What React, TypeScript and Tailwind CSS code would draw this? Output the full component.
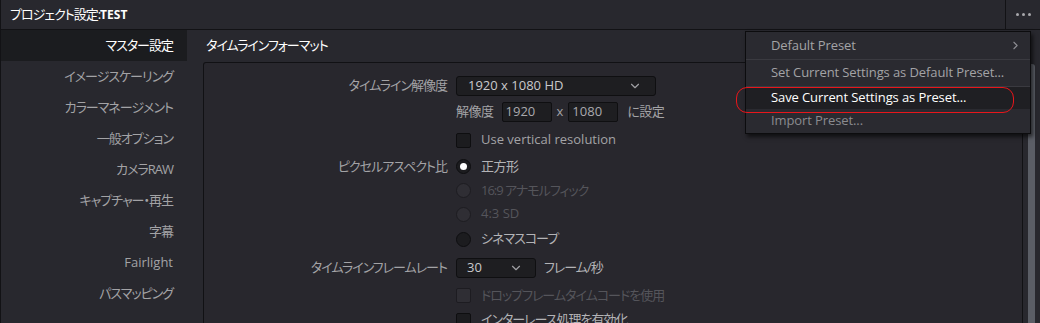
import { ChevronDown, ChevronRight } from 'lucide-react';

const font = { fontFamily: '"Open Sans", "Noto Sans CJK JP", sans-serif', fontFeatureSettings: '"palt"' };

const navItems = [
  'マスター設定',
  'イメージスケーリング',
  'カラーマネージメント',
  '一般オプション',
  'カメラRAW',
  'キャプチャー・再生',
  '字幕',
  'Fairlight',
  'パスマッピング',
];

function Radio({ checked, disabled }: { checked?: boolean; disabled?: boolean }) {
  return (
    <span
      className={`w-[15px] h-[15px] rounded-full flex items-center justify-center border ${
        disabled ? 'bg-[#2f2e34] border-[#1d1c21]' : 'bg-[#1c1c1f] border-[#0e0e10]'
      }`}
    >
      {checked && <span className="w-[7px] h-[7px] rounded-full bg-white" />}
    </span>
  );
}

function Checkbox({ disabled }: { disabled?: boolean }) {
  return (
    <span
      className={`w-[15px] h-[15px] rounded-[2px] border ${
        disabled ? 'bg-[#2f2e34] border-[#1d1c21]' : 'bg-[#1c1c1f] border-[#0e0e10]'
      }`}
    />
  );
}

function Row({ h, label, children }: { h: string; label?: string; children: React.ReactNode }) {
  return (
    <div className={`flex items-center shrink-0 ${h}`}>
      <div className="w-[243px] text-right text-[13px] tracking-[-1px] text-[#a3a3a6]">{label}</div>
      <div className="ml-[9px] flex items-center">{children}</div>
    </div>
  );
}

export default function App() {
  return (
    <div className="relative w-[1040px] h-[323px] overflow-hidden bg-[#28282e] flex flex-col" style={font}>
      {/* title bar */}
      <div className="h-[30px] shrink-0 flex items-stretch border-b border-[#121215] border-l border-l-[#121215]">
        <div className="flex-1 flex items-center pl-[9px] text-[13px] text-white">
          <span className="tracking-[-1px]">プロジェクト設定:</span>
          <span className="font-bold text-[12px]">TEST</span>
        </div>
        <div className="w-[35px] border-l border-[#121215] flex items-center justify-center gap-[3px] pb-[1px]">
          <span className="w-[3px] h-[3px] rounded-full bg-[#a8a8ac]" />
          <span className="w-[3px] h-[3px] rounded-full bg-[#a8a8ac]" />
          <span className="w-[3px] h-[3px] rounded-full bg-[#a8a8ac]" />
        </div>
      </div>

      <div className="flex-1 flex min-h-0 border-l border-[#121215]">
        {/* sidebar */}
        <div className="w-[186px] flex flex-col">
          {navItems.map((item, i) => (
            <div
              key={item}
              className={`h-[31px] shrink-0 flex items-center justify-end pr-[14px] text-[13px] ${
                item === 'Fairlight' ? '' : 'tracking-[-1px]'
              } ${i === 0 ? 'bg-[#1b1c1f] text-white' : 'text-[#a3a3a6]'}`}
            >
              {item}
            </div>
          ))}
        </div>

        {/* main */}
        <div className="flex-1 flex flex-col min-w-0">
          <div className="h-[32px] shrink-0 flex items-center pl-[19px] text-[13px] tracking-[-1px] text-white">タイムラインフォーマット</div>
          <div className="flex-1 flex min-h-0">
            <div className="flex-1 ml-[16px] border-l border-t border-r border-[#111114] rounded-tl-[3px] bg-[#28272d] pt-[10px] flex flex-col overflow-hidden">
              <Row h="h-[25px]" label="タイムライン解像度">
                <div className="w-[200px] h-[20px] bg-[#1e1e21] border border-[#0f0f11] rounded-[3px] flex items-center justify-between pl-[11px] pr-[13px] text-[13px] text-[#c9c9cc]">
                  <span>1920 x 1080 HD</span>
                  <ChevronDown className="w-[14px] h-[14px] text-[#a0a0a4]" strokeWidth={2} />
                </div>
              </Row>
              <Row h="h-[28px]">
                <span className="text-[13px] tracking-[-0.5px] text-[#a3a3a6]">解像度</span>
                <span className="ml-[8px] w-[50px] h-[20px] bg-[#1e1e21] border border-[#0f0f11] rounded-[2px] pl-[3px] text-[13px] text-[#a9a9ad] flex items-center">1920</span>
                <span className="mx-[5px] text-[13px] text-[#a3a3a6]">x</span>
                <span className="w-[50px] h-[20px] bg-[#1e1e21] border border-[#0f0f11] rounded-[2px] pl-[3px] text-[13px] text-[#a9a9ad] flex items-center">1080</span>
                <span className="ml-[9px] text-[13px] tracking-[-0.5px] text-[#a3a3a6]">に設定</span>
              </Row>
              <Row h="h-[28px]">
                <Checkbox />
                <span className="ml-[10px] text-[13px] text-[#a3a3a6]">Use vertical resolution</span>
              </Row>
              <Row h="h-[25px]" label="ピクセルアスペクト比">
                <Radio checked />
                <span className="ml-[10px] text-[13px] tracking-[-0.5px] text-[#b3b3b6]">正方形</span>
              </Row>
              <Row h="h-[23px]">
                <Radio disabled />
                <span className="ml-[10px] text-[13px] tracking-[-1px] text-[#55555b]">16:9 アナモルフィック</span>
              </Row>
              <Row h="h-[24px]">
                <Radio disabled />
                <span className="ml-[10px] text-[13px] text-[#55555b]">4:3 SD</span>
              </Row>
              <Row h="h-[26px]">
                <Radio />
                <span className="ml-[10px] text-[13px] tracking-[-1px] text-[#b3b3b6]">シネマスコープ</span>
              </Row>
              <Row h="h-[32px]" label="タイムラインフレームレート">
                <div className="w-[80px] h-[20px] bg-[#1e1e21] border border-[#0f0f11] rounded-[3px] flex items-center justify-between pl-[10px] pr-[12px] text-[13px] text-[#c9c9cc]">
                  <span>30</span>
                  <ChevronDown className="w-[14px] h-[14px] text-[#a0a0a4]" strokeWidth={2} />
                </div>
                <span className="ml-[8px] text-[13px] tracking-[-1px] text-[#b3b3b6]">フレーム/秒</span>
              </Row>
              <Row h="h-[23px]">
                <Checkbox disabled />
                <span className="ml-[10px] text-[13px] tracking-[-1px] text-[#55555b]">ドロップフレームタイムコードを使用</span>
              </Row>
              <Row h="h-[26px]">
                <Checkbox />
                <span className="ml-[10px] text-[13px] tracking-[-1px] text-[#b3b3b6]">インターレース処理を有効化</span>
              </Row>
            </div>
            {/* scrollbar */}
            <div className="w-[17px] flex justify-center pl-[3px] pr-[4px] pt-[2px]">
              <div className="w-[7px] h-full rounded-t-[3px] bg-[#5b5e66]" />
            </div>
          </div>
        </div>
      </div>

      {/* preset menu */}
      <div className="absolute left-[745px] top-[31px] w-[286px] bg-[#2a2a30] border border-[#0c0c0e] shadow-[2px_3px_4px_rgba(0,0,0,0.6)] flex flex-col text-[13px] tracking-[-0.1px]">
        <div className="h-[28px] flex items-center justify-between pl-[25px] pr-[8px] text-[#a3a3a6] border-b border-[#3a3a40]">
          <span>Default Preset</span>
          <ChevronRight className="w-[13px] h-[13px] text-[#8d8d92]" strokeWidth={2} />
        </div>
        <div className="h-[27px] flex items-center pl-[25px] text-[#a3a3a6] border-b border-[#3a3a40]">
          Set Current Settings as Default Preset...
        </div>
        <div className="h-[22px] flex items-center pl-[25px] text-white bg-[#1f1f23]">
          Save Current Settings as Preset...
        </div>
        <div className="h-[24px] flex items-center pl-[25px] text-[#8a8a8f]">Import Preset...</div>
      </div>

      {/* red highlight */}
      <div className="absolute left-[736px] top-[87px] w-[278px] h-[26px] rounded-[11px] border-[1.5px] border-[#e8161b]" />
    </div>
  );
}
